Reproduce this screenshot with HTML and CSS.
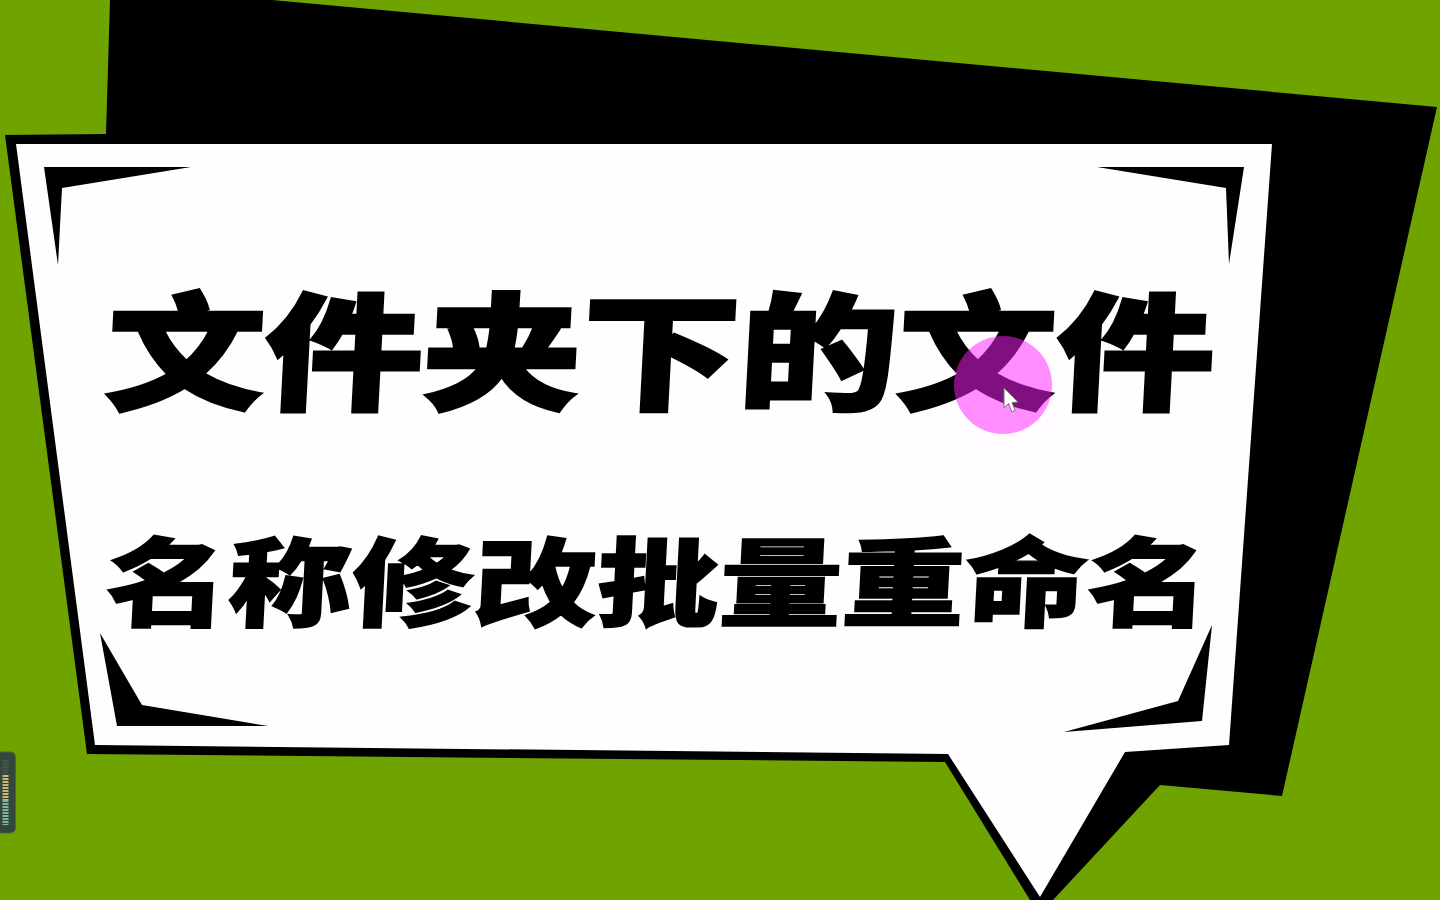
FILE: index.html
```html
<!DOCTYPE html>
<html lang="zh-CN">
<head>
<meta charset="utf-8">
<title>文件夹下的文件名称修改批量重命名</title>
<link rel="stylesheet" href="styles.css">
</head>
<body>
<svg class="canvas" viewBox="0 0 1440 900" xmlns="http://www.w3.org/2000/svg">
  <polygon class="ink" points="110,0 272,0 1437,107 1282,796 1160,785 1053,900 1030,900 945,762 87,754 5,135 106,134"/>
  <polygon class="paper" points="16,144 1272,144 1229,745 1125,752 1040,897 948,754 95,745"/>
  <polygon class="ink" points="44,167 191,167 62,188 58,265"/>
  <polygon class="ink" points="1097,167 1244,167 1229,264 1226,188"/>
  <polygon class="ink" points="100,633 117,726 268,726 142,705"/>
  <polygon class="ink" points="1212,625 1202,721 1064,732 1178,701"/>
  <text class="headline" x="102" y="400" textLength="1108" lengthAdjust="spacingAndGlyphs">文件夹下的文件</text>
  <text class="subline" x="103" y="619" textLength="1104" lengthAdjust="spacingAndGlyphs">名称修改批量重命名</text>
  <circle class="halo" cx="1003" cy="385" r="49"/>
  <path class="cursor" d="M1004 388 L1004 408 L1008.500 403.500 L1012 412 L1015 410.500 L1012 402.500 L1018 402 Z"/>
  <g class="meter">
    <rect class="meter-body" x="-8" y="752" width="23.500" height="81" rx="5"/>
    <line class="meter-off" x1="5.500" y1="760" x2="5.500" y2="773"/>
    <line class="meter-warm" x1="5.500" y1="775" x2="5.500" y2="800"/>
    <line class="meter-cool" x1="5.500" y1="800" x2="5.500" y2="825"/>
  </g>
</svg>
</body>
</html>
```
FILE: styles.css
```css
html, body {
  margin: 0;
  padding: 0;
  background: #6fa300;
  overflow: hidden;
}
.canvas {
  display: block;
  width: 1440px;
  height: 900px;
}
.ink { fill: #000; }
.paper { fill: #fffdff; }
.headline, .subline {
  font-family: "Noto Sans CJK SC", "Noto Sans", sans-serif;
  font-weight: 900;
  fill: #000;
  stroke: #000;
  stroke-linejoin: miter;
  transform-box: fill-box;
  transform-origin: center bottom;
  transform: skewX(-3deg);
}
.headline { font-size: 127px; stroke-width: 3px; }
.subline { font-size: 97px; stroke-width: 1.500px; }
.halo { fill: rgba(255, 30, 255, 0.5); }
.cursor { fill: #fff; stroke: #777; stroke-width: 1px; }
.meter-body { fill: #33473c; stroke: #4f6440; stroke-width: 1px; }
.meter-off, .meter-warm, .meter-cool {
  stroke-width: 6px;
  stroke-dasharray: 2 1;
}
.meter-off { stroke: #3f5650; }
.meter-warm { stroke: #c9b670; }
.meter-cool { stroke: #86b596; }
```
